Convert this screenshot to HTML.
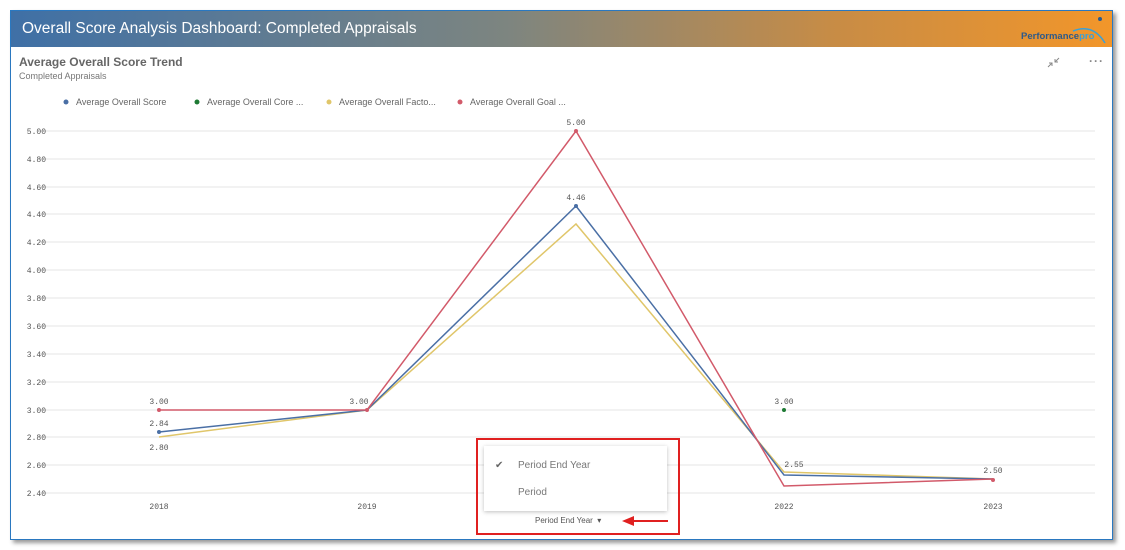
<!DOCTYPE html>
<html><head><style>
body{margin:0;width:1125px;height:550px;background:#fff;font-family:"Liberation Sans",sans-serif;overflow:hidden;position:relative}
.frame{position:absolute;left:10px;top:10px;width:1101px;height:528px;border:1px solid #2a78c0;box-shadow:3px 3px 4px #999;background:#fff}
.hdr{position:absolute;left:0;top:0;width:1101px;height:36px;background:linear-gradient(90deg,#3f70a6 0%,#7d8580 45%,#c88c45 75%,#f2962a 100%)}
.ttl{position:absolute;left:11px;top:9px;color:#fff;font-size:15.5px}
</style></head><body>
<div class="frame">
<div class="hdr"><div class="ttl">Overall Score Analysis Dashboard: Completed Appraisals</div>
<div style="position:absolute;left:1010px;top:20px;font-size:9.5px;font-weight:bold;color:#2d5a8a;white-space:nowrap">Performance<span style="color:#3aa0d8">pro</span></div>
<svg style="position:absolute;left:1060px;top:8px" width="36" height="26"><path d="M2 12 Q22 4 34 24" fill="none" stroke="#3aa0d8" stroke-width="1.5"/></svg>
<div style="position:absolute;left:1087px;top:6px;width:4px;height:4px;border-radius:50%;background:#2d5a8a"></div>
</div>
</div>
<div style="position:absolute;left:19px;top:55px;font-size:12px;font-weight:bold;color:#666">Average Overall Score Trend</div>
<div style="position:absolute;left:19px;top:71px;font-size:9px;color:#777">Completed Appraisals</div>
<svg style="position:absolute;left:1047px;top:57px" width="14" height="12" stroke="#888" stroke-width="1" fill="none"><path d="M1 10 L5 6 M2 6 H5 V9 M12 1 L8 5 M8 2 V5 H11"/></svg>
<div style="position:absolute;left:1089px;top:54px;font-size:12px;color:#888;letter-spacing:1px;font-weight:bold">···</div>
<svg style="position:absolute;left:0;top:0" width="1125" height="550" font-family="Liberation Mono, monospace" font-size="8" fill="#555">
<g font-family="Liberation Sans, sans-serif" font-size="9" fill="#666">
<circle cx="66" cy="102" r="2.5" fill="#4a6fa5"/><text x="76" y="105">Average Overall Score</text>
<circle cx="197" cy="102" r="2.5" fill="#1e7a34"/><text x="207" y="105">Average Overall Core ...</text>
<circle cx="329" cy="102" r="2.5" fill="#e0c66a"/><text x="339" y="105">Average Overall Facto...</text>
<circle cx="460" cy="102" r="2.5" fill="#d25a6a"/><text x="470" y="105">Average Overall Goal ...</text>
</g>
<g stroke="#e4e4e4" stroke-width="1">
<line x1="40" x2="1095" y1="131" y2="131"/><line x1="40" x2="1095" y1="159" y2="159"/><line x1="40" x2="1095" y1="187" y2="187"/><line x1="40" x2="1095" y1="214" y2="214"/><line x1="40" x2="1095" y1="242" y2="242"/><line x1="40" x2="1095" y1="270" y2="270"/><line x1="40" x2="1095" y1="298" y2="298"/><line x1="40" x2="1095" y1="326" y2="326"/><line x1="40" x2="1095" y1="354" y2="354"/><line x1="40" x2="1095" y1="382" y2="382"/><line x1="40" x2="1095" y1="410" y2="410"/><line x1="40" x2="1095" y1="437" y2="437"/><line x1="40" x2="1095" y1="465" y2="465"/><line x1="40" x2="1095" y1="493" y2="493"/>
</g>
<g text-anchor="end">
<text x="46" y="134">5.00</text><text x="46" y="162">4.80</text><text x="46" y="190">4.60</text><text x="46" y="217">4.40</text><text x="46" y="245">4.20</text><text x="46" y="273">4.00</text><text x="46" y="301">3.80</text><text x="46" y="329">3.60</text><text x="46" y="357">3.40</text><text x="46" y="385">3.20</text><text x="46" y="413">3.00</text><text x="46" y="440">2.80</text><text x="46" y="468">2.60</text><text x="46" y="496">2.40</text>
</g>
<g text-anchor="middle">
<text x="159" y="509">2018</text><text x="367" y="509">2019</text><text x="784" y="509">2022</text><text x="993" y="509">2023</text>
</g>
<polyline fill="none" stroke="#e0c66a" stroke-width="1.5" points="159,437 367,410 576,224 784,472 993,479"/>
<polyline fill="none" stroke="#4a6fa5" stroke-width="1.5" points="159,432 367,410 576,206 784,475 993,479"/>
<polyline fill="none" stroke="#d25a6a" stroke-width="1.5" points="159,410 367,410 576,131 784,486 993,479"/>
<g fill="#4a6fa5"><circle cx="159" cy="432" r="2"/><circle cx="576" cy="206" r="2"/></g>
<g fill="#d25a6a"><circle cx="159" cy="410" r="2"/><circle cx="367" cy="410" r="2"/><circle cx="576" cy="131" r="2"/><circle cx="993" cy="480" r="2"/></g>
<circle cx="784" cy="410" r="2" fill="#1e7a34"/>
<g text-anchor="middle">
<text x="159" y="404">3.00</text><text x="159" y="426">2.84</text><text x="159" y="450">2.80</text><text x="359" y="404">3.00</text><text x="576" y="125">5.00</text><text x="576" y="200">4.46</text><text x="784" y="404">3.00</text><text x="794" y="467">2.55</text><text x="993" y="473">2.50</text>
</g>
</svg>
<div style="position:absolute;left:484px;top:446px;width:183px;height:65px;background:#fff;box-shadow:0 1px 4px rgba(0,0,0,.25);font-size:10px;color:#777">
<div style="position:absolute;left:11px;top:14px;color:#666">✔</div>
<div style="position:absolute;left:34px;top:14px">Period End Year</div>
<div style="position:absolute;left:34px;top:41px">Period</div>
</div>
<div style="position:absolute;left:535px;top:516px;font-size:8px;color:#555">Period End Year &nbsp;▾</div>
<div style="position:absolute;left:476px;top:438px;width:200px;height:93px;border:2px solid #e02020"></div>
<svg style="position:absolute;left:620px;top:514px" width="50" height="14"><line x1="12" y1="7" x2="48" y2="7" stroke="#e02020" stroke-width="2"/><polygon points="2,7 14,2 14,12" fill="#e02020"/></svg>
</body></html>
